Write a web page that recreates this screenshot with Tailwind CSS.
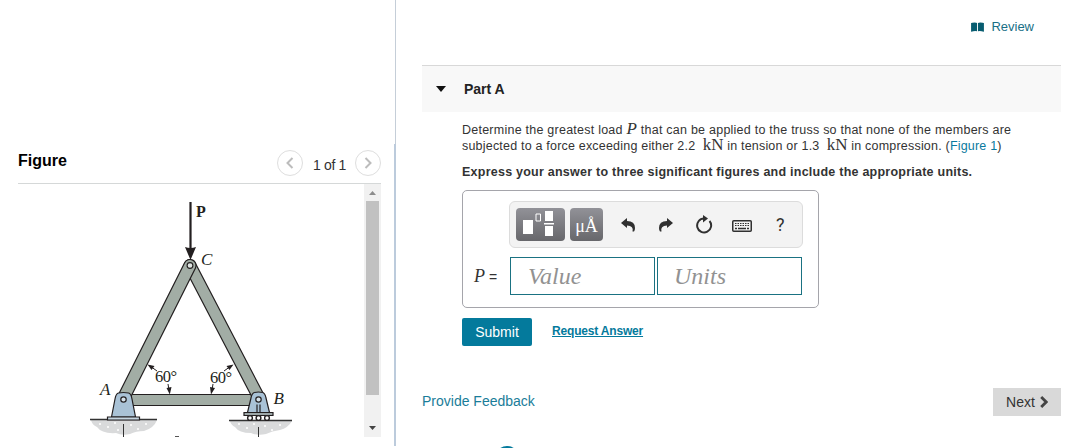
<!DOCTYPE html>
<html lang="en">
<head>
  <meta charset="UTF-8" />
  <title>Part A</title>
  <script src="https://cdn.jsdelivr.net/npm/@tailwindcss/browser@4"></script>
</head>
<body class="bg-white h-[448px] overflow-hidden flex font-['Liberation_Sans',Arial,sans-serif] text-[#333]">

  <!-- Figure panel -->
  <aside class="w-[396px] h-[446px] shrink-0 flex flex-col">
    <div class="h-[144px] shrink-0 border-r border-[#c5ced8]"></div>
    <div class="flex-1 border-r-2 border-[#bccbdc] pl-[18px] pr-[13px] pt-[6px]">
      <header class="h-[34px] flex justify-between border-b border-[#d5d8d8]">
        <h2 class="text-base leading-[22px] font-bold text-black">Figure</h2>
        <nav class="flex items-start text-[14px]">
          <button class="w-[26px] h-[26px] rounded-full border border-[#dedede] flex items-center justify-center" aria-label="Previous">
            <svg class="w-[8px] h-[12px]" viewBox="0 0 8 12" fill="none" stroke="#bcbcbc" stroke-width="2"><path d="M6.500 1 1.500 6l5 5" /></svg>
          </button>
          <span class="w-[52px] pl-px text-center leading-[31px] tracking-[-0.3px] text-[#333]">1 of 1</span>
          <button class="w-[26px] h-[26px] rounded-full border border-[#dedede] flex items-center justify-center" aria-label="Next figure">
            <svg class="w-[8px] h-[12px]" viewBox="0 0 8 12" fill="none" stroke="#bcbcbc" stroke-width="2"><path d="m1.500 1 5 5-5 5" /></svg>
          </button>
        </nav>
      </header>
      <div class="flex h-[253px]">
        <svg class="w-[346px] h-[253px]" viewBox="18 184 346 253" font-family="Liberation Serif, serif" fill="#231f20">
          <!-- ground -->
          <path d="M91 420h66q-3 8-13 11-8 0-14 3-8 2-14-1-14 1-19-6-5-2-6-7z" fill="#d9dadb" />
          <path d="M230 421h62q-4 7-12 9-8 1-14 4-8 2-15-1-12 0-16-6-4-2-5-6z" fill="#d9dadb" />
          <g fill="#fff">
            <circle cx="100" cy="424" r="1" /><circle cx="108" cy="427" r="1" /><circle cx="115" cy="423" r="1" />
            <circle cx="118" cy="430" r="1" /><circle cx="131" cy="425" r="1" /><circle cx="138" cy="429" r="1" /><circle cx="146" cy="424" r="1" />
            <circle cx="239" cy="424" r="1" /><circle cx="247" cy="428" r="1" /><circle cx="254" cy="424" r="1" />
            <circle cx="265" cy="426" r="1" /><circle cx="272" cy="430" r="1" /><circle cx="280" cy="425" r="1" />
          </g>
          <path d="M90 419.500h67M229 420.500h63" stroke="#333" stroke-width="1.500" />
          <path d="M123.500 424v13M258.500 427v10" stroke="#333" />
          <path d="M175 436.500h4" stroke="#555" />
          <!-- members -->
          <path d="M124 400h134" stroke="#231f20" stroke-width="12.200" />
          <path d="M124 400h134" stroke="#a2ada5" stroke-width="9.800" />
          <path d="M190 265.500 257.500 395" stroke="#231f20" stroke-width="12.800" stroke-linecap="round" />
          <path d="M190 265.500 257.500 395" stroke="#a2ada5" stroke-width="10.400" stroke-linecap="round" />
          <path d="M190 265.500 125 395" stroke="#231f20" stroke-width="13.200" stroke-linecap="round" />
          <path d="M190 265.500 125 395" stroke="#a2ada5" stroke-width="10.800" stroke-linecap="round" />
          <circle cx="190" cy="265.500" r="2.900" fill="#dfe5e2" stroke="#231f20" stroke-width="1.100" />
          <!-- load -->
          <path d="M190.500 202v48" stroke="#231f20" stroke-width="2.200" />
          <path d="M185 247q5.500 2 11 0l-5.500 13z" />
          <!-- supports -->
          <g stroke="#231f20" stroke-width="1.200">
            <path d="M111.500 417 115 399q1-5.500 3.500-6 5-1 10 0 2.500.5 3.500 6l3.500 18z" fill="#a9c2d6" />
            <path d="M107.500 417h32v3h-32z" fill="#c5d5e0" />
            <circle cx="123.500" cy="399.500" r="2.700" fill="#d5e1ea" />
            <path d="M247.500 412.500 251 398q1-5 3.500-5.500 4-1 8 0 2.500.5 3.500 5.500l3.500 14.500z" fill="#a9c2d6" />
            <path d="M257 404.500v8M260 404.500v8" />
            <path d="M244 412.500h29v3h-29z" fill="#9da7a8" />
            <circle cx="258.500" cy="399.500" r="2.700" fill="#d5e1ea" />
            <g fill="#fff" stroke-width="1.400"><circle cx="250" cy="418" r="2.400" /><circle cx="258.500" cy="418" r="2.400" /><circle cx="267" cy="418" r="2.400" /></g>
          </g>
          <!-- angle arrows -->
          <g stroke="#231f20" fill="none">
            <path d="m150 366 7 5M168 384l1 6M231 366l-7 5M213 384l-1 6" />
          </g>
          <path d="m147.500 364.500 7 1.500-3 4zM166.500 388l5-1-1.700 7.500zM233.500 364.500l-7 1.500 3 4zM210 387l5 1-4 6.500z" />
          <text x="196" y="217" font-size="16" font-weight="bold">P</text>
          <text x="201" y="265" font-size="17" font-style="italic">C</text>
          <text x="100" y="395" font-size="17" font-style="italic">A</text>
          <text x="273.500" y="404" font-size="17" font-style="italic">B</text>
          <text x="155" y="382" font-size="16.500" textLength="22">60°</text>
          <text x="210" y="383" font-size="16.500" textLength="22">60°</text>
        </svg>
        <div class="w-[17px] bg-[#f1f1f1] flex flex-col items-center justify-between py-[7px]">
          <svg class="w-[7px] h-[4px] shrink-0" viewBox="0 0 7 4"><path d="M0 4 3.500 0 7 4z" fill="#8c8c8c" /></svg>
          <div class="w-[13px] h-[194px] -mt-[26px] bg-[#c1c1c1]"></div>
          <svg class="w-[7px] h-[4px] shrink-0" viewBox="0 0 7 4"><path d="M0 0h7L3.500 4z" fill="#444" /></svg>
        </div>
      </div>
    </div>
  </aside>

  <!-- Question panel -->
  <main class="w-[665px] pl-[26px] flex flex-col">
    <div class="h-[65px] shrink-0 flex justify-end pr-[27px] pt-[18px]">
      <a class="h-[18px] flex items-center gap-[7px] text-[13px] text-[#1a6f86]">
        <svg class="w-[13px] h-[11px]" viewBox="0 0 14 12"><path d="M1.500.8Q5 0 6.500 1.200v9Q5 9.200 0 10.500V1zM7.500 1.200Q9 0 12.500.8l1.500.2v9.500q-5-1.300-6.500-.3z" fill="#075c70" /></svg>
        Review
      </a>
    </div>
    <div class="h-[47px] shrink-0 bg-[#f8f8f8] border-t border-[#d8d8d8] flex items-center pl-[14px] gap-[18px]">
      <svg class="w-[10px] h-[6px]" viewBox="0 0 10 6"><path d="M0 0h10L5 6z" fill="#111" /></svg>
      <h3 class="text-sm font-bold text-[#222]">Part A</h3>
    </div>

    <section class="pl-10 flex flex-col items-start">
      <p class="pt-[8px] text-[12.500px] leading-[16px] whitespace-nowrap">
        <span class="block h-[16px] tracking-[0.24px]">Determine the greatest load <i class="font-['Liberation_Serif',serif] text-[17px] leading-none">P</i> that can be applied to the truss so that none of the members are</span>
        <span class="block h-[16px] tracking-[0.2px]">subjected to a force exceeding either 2.2 &nbsp;<span class="font-['Liberation_Serif',serif] text-[17px] leading-none tracking-normal">kN</span> in tension or 1.3 &nbsp;<span class="font-['Liberation_Serif',serif] text-[17px] leading-none tracking-normal">kN</span> in compression. (<a class="text-[#0a7a9e]">Figure 1</a>)</span>
      </p>
      <p class="mt-[12px] text-[12.500px] leading-[16px] font-bold tracking-[0.24px] whitespace-nowrap">Express your answer to three significant figures and include the appropriate units.</p>

      <div class="mt-[10px] w-[357px] h-[118px] rounded-[5px] border border-[#a5a5ab] pl-[11px] pt-[10px] flex flex-col">
        <div class="ml-[35px] w-[294px] h-[47px] bg-[#f3f3f3] border border-[#dcdcdc] rounded-[6px] flex items-center pl-[6px]">
          <button class="w-[49px] h-[33px] rounded-[4px] bg-linear-to-b from-[#929298] to-[#67676b]" aria-label="Templates">
            <svg class="w-[49px] h-[33px]" viewBox="0 0 49 33" fill="#fff">
              <path d="M7 12h10v14H7zM29 3h8v10h-8zM28 15h10v1.500H28zM29 18h8v10h-8z" />
              <path d="M20 6h4.500v7H20z" fill="none" stroke="#fff" />
            </svg>
          </button>
          <button class="ml-[5px] w-[33px] h-[33px] rounded-[4px] bg-linear-to-b from-[#929298] to-[#67676b] pt-[4px] text-white text-[18px] leading-[29px] font-['Liberation_Serif',serif]">μÅ</button>
          <svg class="ml-[18px] w-[14px] h-[14px]" viewBox="0 0 14 14"><path d="M0 5 6 0v3q8 0 8 7 0 2-1 3.500h-1.500Q13 8 6 7.500V10z" fill="#303030" /></svg>
          <svg class="ml-[24px] w-[14px] h-[14px]" viewBox="0 0 14 14"><path d="M14 5 8 0v3Q0 3 0 10q0 2 1 3.500h1.500Q1 8 8 7.500V10z" fill="#303030" /></svg>
          <svg class="ml-[22px] w-[18px] h-[19px]" viewBox="0 0 18 19"><path d="M14.500 6A7 7 0 1 1 9 3.500" fill="none" stroke="#303030" stroke-width="2" /><path d="m8 0 5 3.500L8 7.500z" fill="#303030" /></svg>
          <svg class="ml-[19px] mt-[3px] w-[20px] h-[12px]" viewBox="0 0 20 12" fill="none" stroke="#303030">
            <rect x=".75" y=".75" width="18.500" height="10.500" rx="1" stroke-width="1.500" />
            <path d="M3 3.500h14M3 5.500h14" stroke-dasharray="1.500 1" />
            <path d="M3 8.500h2M6 8.500h8M15 8.500h2" stroke-width="1.500" />
          </svg>
          <span class="ml-[24px] font-[Roboto,sans-serif] text-[18px] leading-[20px] text-[#303030]">?</span>
        </div>
        <div class="mt-[9px] flex items-center">
          <label class="w-[36px] text-[14px] whitespace-nowrap"><i class="font-['Liberation_Serif',serif] text-[18px]">P</i> =</label>
          <div class="w-[145px] h-[38px] border border-[#1a7282] pl-[17px] font-['Liberation_Serif',serif] italic text-[24px] leading-[36px] text-[#929292]">Value</div>
          <div class="ml-[2px] w-[145px] h-[38px] border border-[#1a7282] pl-[16px] font-['Liberation_Serif',serif] italic text-[24px] leading-[36px] text-[#929292]">Units</div>
        </div>
      </div>

      <div class="mt-[10px] flex items-center">
        <button class="w-[70px] h-[28px] rounded-[2px] bg-[#047a9c] text-white text-[14px]">Submit</button>
        <a class="ml-5 -mt-[3px] text-[12px] font-bold tracking-[-0.18px] underline text-[#047a9c]">Request Answer</a>
      </div>
    </section>

    <footer class="mt-[42px] flex justify-between">
      <a class="text-[14px] leading-[26px] text-[#1a7d99]">Provide Feedback</a>
      <button class="w-[68px] h-[28px] bg-[#d9d9d9] flex items-center justify-center gap-[5px] text-[14px] text-[#333]">
        Next
        <svg class="w-[8px] h-[12px]" viewBox="0 0 8 12" fill="none" stroke="#444" stroke-width="2.800"><path d="m1.200 1 5 5-5 5" /></svg>
      </button>
    </footer>
    <div class="ml-[73px] mt-[30px] w-[24px] h-[24px] shrink-0 rounded-full bg-[#047a9c]"></div>
  </main>

</body>
</html>
